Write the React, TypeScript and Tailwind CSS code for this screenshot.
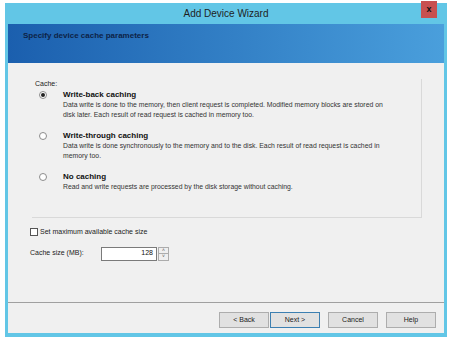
import { useState } from 'react';

const font = { fontFamily: '"Liberation Sans", Arial, sans-serif' };

interface CacheOption {
  title: string;
  lines: string[];
}

const options: CacheOption[] = [
  {
    title: 'Write-back caching',
    lines: [
      'Data write is done to the memory, then client request is completed. Modified memory blocks are stored on',
      'disk later. Each result of read request is cached in memory too.',
    ],
  },
  {
    title: 'Write-through caching',
    lines: [
      'Data write is done synchronously to the memory and to the disk. Each result of read request is cached in',
      'memory too.',
    ],
  },
  {
    title: 'No caching',
    lines: ['Read and write requests are processed by the disk storage without caching.'],
  },
];

function Radio({ checked }: { checked: boolean }) {
  return (
    <div className="w-[8px] h-[8px] rounded-full border border-[#8c8c8c] bg-white flex items-center justify-center">
      {checked && <div className="w-[4px] h-[4px] rounded-full bg-[#222]" />}
    </div>
  );
}

function WizardButton({ label, primary }: { label: string; primary?: boolean }) {
  return (
    <button
      className={`w-[50px] h-[16px] text-[7px] text-[#222] bg-[#e1e1e1] border flex items-center justify-center ${
        primary ? 'border-[#3c7fb1]' : 'border-[#adadad]'
      }`}
    >
      {label}
    </button>
  );
}

export default function App() {
  const [selected, setSelected] = useState(0);

  return (
    <div className="w-[451px] h-[341px] bg-white pt-[3px] pl-[5px]" style={font}>
      <div className="relative w-[442px] h-[334px] bg-[#62c6e6] flex flex-col px-[3px] pb-[4px]">
        <div className="h-[21px] flex items-center justify-center text-[10px] text-[#1e1e1e]">
          Add Device Wizard
        </div>
        <div className="absolute right-[10px] top-[-2px] w-[16px] h-[17px] bg-[#c75050] flex items-center justify-center text-[9px] font-bold text-[#111] leading-none">
          x
        </div>

        <div className="flex-1 bg-[#f0f0f0] flex flex-col">
          {/* header */}
          <div className="h-[39px] bg-gradient-to-r from-[#1b5fae] to-[#4a9fdc] pl-[15px] pt-[6px] text-[8px] font-bold text-[#0d2347]">
            Specify device cache parameters
          </div>

          {/* body */}
          <div className="flex-1 flex flex-col">
            <div className="ml-[24px] mt-[16px] w-[390px] h-[139px] border-r border-b border-[#d9d9d9]">
              <div className="pl-[3px] h-[9px] leading-[9px] text-[7px] text-[#222]">Cache:</div>
              <div className="flex flex-col gap-[11px] mt-[2px]">
                {options.map((o, i) => (
                  <div key={o.title} className="flex cursor-pointer" onClick={() => setSelected(i)}>
                    <div className="w-[31px] pl-[7px] pt-[1px]">
                      <Radio checked={selected === i} />
                    </div>
                    <div className="flex flex-col">
                      <div className="h-[10px] leading-[10px] text-[8px] font-bold text-[#111]">{o.title}</div>
                      {o.lines.map((l) => (
                        <div key={l} className="h-[10px] leading-[10px] text-[6.85px] text-[#333] whitespace-nowrap">
                          {l}
                        </div>
                      ))}
                    </div>
                  </div>
                ))}
              </div>
            </div>

            <div className="flex items-center mt-[9px] ml-[22px] gap-[2px]">
              <div className="w-[8px] h-[8px] border border-[#555] bg-white" />
              <span className="text-[7px] text-[#222]">Set maximum available cache size</span>
            </div>

            <div className="flex items-center mt-[9px] ml-[22px]">
              <span className="w-[71px] text-[7px] text-[#222]">Cache size (MB):</span>
              <div className="w-[56px] h-[14px] bg-white border border-[#7a7a7a] flex items-center justify-end pr-[3px] text-[7px] text-[#111]">
                128
              </div>
              <div className="w-[11px] h-[14px] flex flex-col ml-[1px]">
                <div className="flex-1 border border-[#acacac] bg-[#efefef] flex items-center justify-center text-[5px] leading-none text-[#555]">
                  ˄
                </div>
                <div className="flex-1 border border-t-0 border-[#acacac] bg-[#efefef] flex items-center justify-center text-[5px] leading-none text-[#555]">
                  ˅
                </div>
              </div>
            </div>
          </div>

          {/* footer */}
          <div className="h-[31px] border-t border-[#a0a0a0] flex justify-end items-start pt-[9px] pr-[8px]">
            <div className="flex gap-[1px]">
              <WizardButton label="< Back" />
              <WizardButton label="Next >" primary />
            </div>
            <div className="ml-[8px]">
              <WizardButton label="Cancel" />
            </div>
            <div className="ml-[8px]">
              <WizardButton label="Help" />
            </div>
          </div>
        </div>
      </div>
    </div>
  );
}
